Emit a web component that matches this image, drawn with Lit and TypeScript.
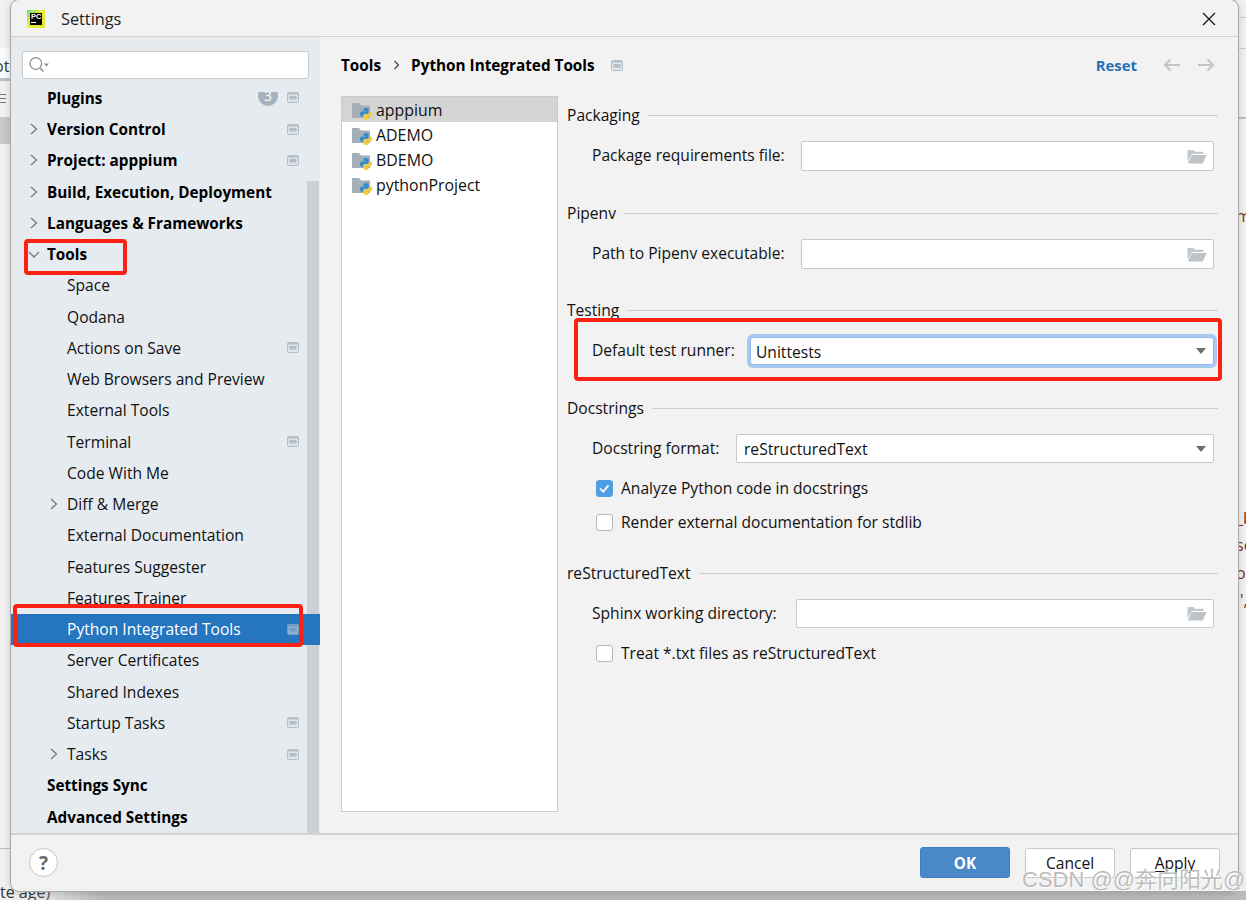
import { LitElement, html, css, svg } from "lit";
import { customElement } from "lit/decorators.js";

type Row = { t: string; lv: number; bold?: boolean; ch?: "r" | "d"; cfg?: boolean; badge?: string; sel?: boolean };

const rows: Row[] = [
  { t: "Plugins", lv: 0, bold: true, cfg: true, badge: "3" },
  { t: "Version Control", lv: 0, bold: true, ch: "r", cfg: true },
  { t: "Project: apppium", lv: 0, bold: true, ch: "r", cfg: true },
  { t: "Build, Execution, Deployment", lv: 0, bold: true, ch: "r" },
  { t: "Languages & Frameworks", lv: 0, bold: true, ch: "r" },
  { t: "Tools", lv: 0, bold: true, ch: "d" },
  { t: "Space", lv: 1 },
  { t: "Qodana", lv: 1 },
  { t: "Actions on Save", lv: 1, cfg: true },
  { t: "Web Browsers and Preview", lv: 1 },
  { t: "External Tools", lv: 1 },
  { t: "Terminal", lv: 1, cfg: true },
  { t: "Code With Me", lv: 1 },
  { t: "Diff & Merge", lv: 1, ch: "r" },
  { t: "External Documentation", lv: 1 },
  { t: "Features Suggester", lv: 1 },
  { t: "Features Trainer", lv: 1 },
  { t: "Python Integrated Tools", lv: 1, cfg: true, sel: true },
  { t: "Server Certificates", lv: 1 },
  { t: "Shared Indexes", lv: 1 },
  { t: "Startup Tasks", lv: 1, cfg: true },
  { t: "Tasks", lv: 1, ch: "r", cfg: true },
  { t: "Settings Sync", lv: 0, bold: true },
  { t: "Advanced Settings", lv: 0, bold: true },
];

const projects = ["apppium", "ADEMO", "BDEMO", "pythonProject"];

const cfgIcon = html`<svg class="cfg" width="12" height="11" viewBox="0 0 12 11">
  <rect x=".5" y=".5" width="11" height="10" rx="1" fill="#dde3e8" stroke="#b3bec7" />
  <rect x="1" y="1" width="10" height="1.500" fill="#b3bec7" />
  <rect x="2.500" y="4" width="7" height="3.500" fill="#b3bec7" />
</svg>`;

const folderIcon = html`<svg class="open" width="20" height="15" viewBox="0 0 20 15">
  <path d="M0.500 1h6l1.500 1.800h8.500v2.200H5L.5 12.500z" fill="#c2c9cd" />
  <path d="M4.800 6H19.600L15.800 14.500H.8z" fill="#bcc4c9" />
</svg>`;

const pyLogo = "M6 0C4.200 0 3.500.8 3.500 1.800V3H6.300V3.500H2C.8 3.500 0 4.500 0 6s.8 2.700 2 2.700H3V7.400C3 6.400 3.800 5.700 4.800 5.700H7.200C8 5.700 8.600 5.100 8.600 4.300V1.800C8.600 .8 7.800 0 6 0z";

const pyFolder = svg`<svg class="py" width="24" height="18" viewBox="0 0 24 18">
  <path d="M0 1h7l2 2.500h9V16H0z" fill="#a4afb8" />
  <g transform="translate(8 6)">
    <path d=${pyLogo} fill="#2f8bd0" />
    <path d=${pyLogo} fill="#f7cd3a" transform="rotate(180 6.100 6)" />
  </g>
</svg>`;

@customElement("app-root")
export class AppRoot extends LitElement {
  static styles = css`
    :host {
      display: block;
      position: relative;
      width: 1246px;
      height: 900px;
      overflow: hidden;
      background: #f1f1f1;
      font-family: "Open Sans", "Noto Sans", sans-serif;
      font-size: 15.600px;
      color: #111;
    }
    .bits span {
      position: absolute;
      font-size: 16px;
      line-height: 16px;
      white-space: nowrap;
    }
    .bits .dk { color: #333; }
    .bits .br { color: #8a2a10; }
    .b1 { left: -6px; top: 58px; }
    .b2 { left: 0; top: 884px; }
    .b3 { left: 1236px; top: 208px; }
    .b4 { left: 1236px; top: 510px; }
    .b5 { left: 1236px; top: 537px; }
    .b6 { left: 1236px; top: 565px; }
    .b7 { left: 1240px; top: 592px; }
    .bits i { position: absolute; display: block; }
    .s0 { left: 0; top: 48px; width: 11px; height: 30px; background: #fbfbfb; }
    .s1 { left: 0; top: 78px; width: 11px; height: 3px; background: #b9bfc7; }
    .s2 { left: 0; top: 117px; width: 11px; height: 27px; background: #c9c9c9; }
    .s3 { left: 1238px; top: 17px; width: 8px; height: 1px; background: #cfcfcf; }
    .s4 { left: 1238px; top: 48px; width: 8px; height: 1px; background: #cfcfcf; }
    .s5 { left: 1238px; top: 117px; width: 8px; height: 2px; background: #bdbdbd; }
    .s6 { left: 0; top: 848px; width: 11px; height: 1px; background: #bdbdbd; }
    .s8 { left: 0; top: 94px; width: 6px; height: 1px; background: #777; box-shadow: 0 4px 0 #777, 0 8px 0 #777; }
    .s7 {
      left: 30px;
      top: 891px;
      width: 1216px;
      height: 9px;
      background: linear-gradient(to right, rgba(190, 190, 190, 0), #bcbcbc 70px);
    }

    .dialog {
      position: absolute;
      z-index: 0;
      left: 11px;
      top: 0;
      width: 1227px;
      height: 891px;
      display: flex;
      flex-direction: column;
      background: #f2f2f2;
      border-radius: 8px;
      overflow: hidden;
      box-shadow: 0 0 0 1px #a8a8a8, 0 2px 8px rgba(0, 0, 0, 0.2);
    }
    .title {
      height: 36px;
      flex: none;
      display: flex;
      align-items: center;
      padding: 0 21px 0 16px;
      border-bottom: 1px solid #d0d0d0;
      font-size: 16.300px;
    }
    .title .x { margin-top: 2px; }
    .pc {
      width: 18px;
      height: 18px;
      box-sizing: border-box;
      background: linear-gradient(135deg, #5fe07a 0%, #e8f03c 45%, #e2e22a 100%);
      padding: 3px;
      margin-right: 16px;
      margin-top: 2px;
    }
    .pc div {
      width: 100%;
      height: 100%;
      background: #000;
      color: #fff;
      font: bold 7.500px/7px "Liberation Sans", sans-serif;
      padding-left: 1px;
      box-sizing: border-box;
      display: flex;
      flex-direction: column;
    }
    .pc u { display: block; width: 5px; height: 1px; background: #fff; margin-top: 2px; }
    .title .grow { flex: 1; color: #222; padding-top: 2px; }
    .body { flex: 1; display: flex; min-height: 0; }

    .side {
      position: relative;
      width: 309px;
      flex: none;
      background: #e6ebf0;
      display: flex;
      flex-direction: column;
    }
    .search {
      margin: 14px 11px 0 11px;
      height: 28px;
      flex: none;
      box-sizing: border-box;
      background: #fff;
      border: 1px solid #c9c9c9;
      border-radius: 3px;
      display: flex;
      align-items: center;
      padding-left: 6px;
    }
    .tree { margin-top: 13px; flex: 1; overflow: hidden; min-height: 0; }
    .tree-in { margin-top: -9.650px; }
    .row {
      height: 31.260px;
      display: flex;
      align-items: center;
      box-sizing: border-box;
      padding-right: 21px;
      color: #111;
      white-space: nowrap;
    }
    .row.l0 { padding-left: 36px; }
    .row.l1 { padding-left: 56px; }
    .row.bold { font-weight: 700; font-size: 15.300px; color: #000; }
    .row.sel { background: #2675bf; color: #fff; position: relative; z-index: 1; }
    .row.sel .cfg { opacity: 0.55; }
    .row .lab { flex: 1; }
    .chev { width: 20px; margin-left: -20px; height: 12px; display: block; flex: none; }
    .badge {
      width: 20px;
      height: 20px;
      border-radius: 50%;
      background: #a6b2bd;
      color: #fff;
      font-weight: 400;
      font-size: 14px;
      line-height: 20px;
      text-align: center;
      margin-right: 9px;
      margin-top: -4px;
    }
    .scroll {
      position: absolute;
      left: 296px;
      top: 144px;
      bottom: 0;
      width: 12px;
      background: #ccd1d6;
    }

    .main { flex: 1; display: flex; flex-direction: column; min-width: 0; }
    .crumb {
      height: 59px;
      flex: none;
      display: flex;
      align-items: center;
      padding: 0 22px 3px 21px;
      box-sizing: border-box;
      font-weight: 700;
      font-size: 15.300px;
      color: #000;
    }
    .crumb .sep { width: 30px; display: flex; justify-content: center; }
    .crumb .cfg { margin-left: 16px; }
    .crumb .grow { flex: 1; }
    .reset { color: #2470b3; margin-right: 25px; font-size: 14.900px; }
    .arrows { display: flex; gap: 14px; }
    .content { flex: 1; display: flex; min-height: 0; padding: 0 0 21px 21px; }
    .plist {
      width: 217px;
      flex: none;
      box-sizing: border-box;
      background: #fff;
      border: 1px solid #c9c9c9;
    }
    .pitem {
      height: 25px;
      display: flex;
      align-items: center;
      padding-left: 10px;
      font-size: 15.900px;
      color: #111;
    }
    .pitem.sel { background: #d4d4d4; }
    .py { flex: none; margin-top: 3px; }

    .form { width: 651px; margin-left: 9px; flex: none; }
    .head { height: 20px; display: flex; align-items: center; gap: 8px; white-space: nowrap; color: #111; }
    .head::after { content: ""; flex: 1; height: 1px; background: #cdcdcd; margin-left: 0; }
    .pack { margin-top: 9px; }
    .gap { margin-top: 32px; }
    .gap31 { margin-top: 31px; }
    .frow { margin-top: 16px; height: 30px; padding: 0 4px 0 25px; display: flex; align-items: center; }
    .frow.short { height: 29px; }
    .frow .lab { flex: none; white-space: nowrap; }
    .w1 { width: 209px; margin-top: -2px; }
    .w3 { width: 158px; margin-top: -2px; }
    .w4 { width: 144px; margin-top: -2px; }
    .w5 { width: 204px; margin-top: -2px; }
    .field {
      flex: 1;
      height: 100%;
      box-sizing: border-box;
      background: #fff;
      border: 1px solid #c9c9c9;
      border-radius: 2px;
      display: flex;
      align-items: center;
      justify-content: space-between;
      padding: 0 6px 0 7px;
    }
    .field .txt { padding-top: 1px; }
    .field.focus {
      height: 28px;
      border: 1px solid #8fbcec;
      box-shadow: 0 0 0 3px #a8caf0;
      border-radius: 3px;
      padding-left: 5px;
    }
    .tri { width: 0; height: 0; border: 5.500px solid transparent; border-top: 6px solid #6e6e6e; border-bottom: 0; margin-right: 1px; }
    .check { height: 20px; padding-left: 29px; display: flex; align-items: center; white-space: nowrap; }
    .m15 { margin-top: 15px; }
    .m14 { margin-top: 14px; }
    .box {
      width: 17px;
      height: 17px;
      box-sizing: border-box;
      border-radius: 3px;
      background: #fff;
      border: 1px solid #b6b6b6;
      margin-right: 8px;
      flex: none;
      display: block;
    }
    .box.on { background: #4f9ee3; border-color: #4f9ee3; }

    .foot {
      flex: none;
      border-top: 2px solid #d2d2d2;
      display: flex;
      align-items: center;
      padding: 0 18px 1px;
      box-sizing: content-box;
      height: 55px;
      position: relative;
    }
    .help {
      width: 29px;
      height: 29px;
      box-sizing: border-box;
      border-radius: 50%;
      background: #fff;
      border: 1px solid #c4c4c4;
      color: #6b6b6b;
      font-weight: 700;
      font-size: 19px;
      display: flex;
      align-items: center;
      justify-content: center;
      margin-right: auto;
    }
    .btn {
      width: 90px;
      height: 30px;
      box-sizing: border-box;
      background: #fff;
      border: 1px solid #c8c8c8;
      border-radius: 3px;
      display: flex;
      align-items: center;
      justify-content: center;
      margin-left: 15px;
      color: #111;
    }
    .btn.ok { background: #4a88c7; border-color: #3f7fc0; color: #fff; font-weight: 700; font-size: 15.300px; height: 31px; padding-top: 1px; }
    .btn u { text-underline-offset: 2px; }

    .mark {
      position: absolute;
      z-index: 1;
      box-sizing: border-box;
      border: 4px solid #fb2115;
      border-radius: 4px;
      pointer-events: none;
    }
    .m1 { left: 24px; top: 239px; width: 103px; height: 36px; }
    .m2 { left: 13px; top: 604px; width: 290px; height: 43px; }
    .m3 { left: 574px; top: 318px; width: 648px; height: 63px; }
    .wm {
      position: absolute;
      z-index: 1;
      left: 1022px;
      top: 867px;
      font: 22px/26px "Liberation Sans", "Noto Sans CJK SC", sans-serif;
      color: rgba(165, 165, 165, 0.75);
      text-shadow: 0 0 1px #fff, 1px 1px 0 rgba(255, 255, 255, 0.8);
      white-space: nowrap;
    }
  `;

  private chevron(c?: "r" | "d") {
    if (!c) return null;
    const d = c === "r" ? "M4 1l5.500 5-5.500 5" : "M2 4l5 5 5-5";
    return html`<svg class="chev" viewBox="0 0 20 12" width="20" height="12">
      <path d=${d} fill="none" stroke="#7a7a7a" stroke-width="1.300" />
    </svg>`;
  }

  render() {
    return html`
      <div class="bits">
        <i class="s0"></i>
        <span class="b1 dk">ot</span>
        <span class="b2 dk">te age)</span>
        <span class="b3 br">m</span>
        <span class="b4 br">_b</span>
        <span class="b5 br">se</span>
        <span class="b6 br">on</span>
        <span class="b7 br">',</span>
        <i class="s1"></i><i class="s2"></i><i class="s3"></i><i class="s4"></i><i class="s5"></i><i class="s6"></i><i class="s7"></i><i class="s8"></i>
      </div>
      <div class="dialog">
        <div class="title">
          <div class="pc"><div>PC<u></u></div></div>
          <div class="grow">Settings</div>
          <svg class="x" width="16" height="16" viewBox="0 0 16 16"><path d="M2 2l12 12M14 2L2 14" stroke="#111" stroke-width="1.200" fill="none" /></svg>
        </div>
        <div class="body">
          <div class="side">
            <div class="search">
              <svg width="24" height="18" viewBox="0 0 24 18">
                <circle cx="6.800" cy="7.500" r="5.800" fill="none" stroke="#8d8d8d" stroke-width="1.200" />
                <path d="M11 12l3.500 3.500" stroke="#8d8d8d" stroke-width="1.500" />
                <path d="M15 7.500h5l-2.500 3z" fill="#8d8d8d" />
              </svg>
            </div>
            <div class="tree">
              <div class="tree-in">
                ${rows.map(
                  (r) => html`<div class="row l${r.lv} ${r.bold ? "bold" : ""} ${r.sel ? "sel" : ""}">
                    ${this.chevron(r.ch)}
                    <span class="lab">${r.t}</span>
                    ${r.badge ? html`<span class="badge">${r.badge}</span>` : null}
                    ${r.cfg ? cfgIcon : null}
                  </div>`
                )}
              </div>
            </div>
            <div class="scroll"></div>
          </div>
          <div class="main">
            <div class="crumb">
              <span>Tools</span>
              <span class="sep"><svg width="7" height="10" viewBox="0 0 7 10"><path d="M1.500 1l4 4-4 4" fill="none" stroke="#444" stroke-width="1.200" /></svg></span>
              <span>Python Integrated Tools</span>
              ${cfgIcon}
              <span class="grow"></span>
              <span class="reset">Reset</span>
              <span class="arrows">
                <svg width="20" height="14" viewBox="0 0 20 14"><path d="M18 7H3M8.500 1.500L3 7l5.500 5.500" fill="none" stroke="#c4c4c4" stroke-width="2" /></svg>
                <svg width="20" height="14" viewBox="0 0 20 14"><path d="M2 7h15M11.500 1.500L17 7l-5.500 5.500" fill="none" stroke="#c4c4c4" stroke-width="2" /></svg>
              </span>
            </div>
            <div class="content">
              <div class="plist">
                ${projects.map(
                  (p, i) => html`<div class="pitem ${i === 0 ? "sel" : ""}">${pyFolder}<span>${p}</span></div>`
                )}
              </div>
              <div class="form">
                <div class="head pack">Packaging</div>
                <div class="frow"><span class="lab w1">Package requirements file:</span><div class="field"><span></span>${folderIcon}</div></div>
                <div class="head gap">Pipenv</div>
                <div class="frow"><span class="lab w1">Path to Pipenv executable:</span><div class="field"><span></span>${folderIcon}</div></div>
                <div class="head gap31">Testing</div>
                <div class="frow"><span class="lab w3">Default test runner:</span><div class="field focus"><span class="txt">Unittests</span><span class="tri"></span></div></div>
                <div class="head gap">Docstrings</div>
                <div class="frow short"><span class="lab w4">Docstring format:</span><div class="field"><span class="txt">reStructuredText</span><span class="tri"></span></div></div>
                <div class="check m15">
                  <svg class="box on" viewBox="0 0 17 17"><path d="M3.500 8.500l3.500 3.500 6-7" fill="none" stroke="#fff" stroke-width="2" /></svg>
                  <span>Analyze Python code in docstrings</span>
                </div>
                <div class="check m14"><span class="box"></span><span>Render external documentation for stdlib</span></div>
                <div class="head gap31">reStructuredText</div>
                <div class="frow short"><span class="lab w5">Sphinx working directory:</span><div class="field"><span></span>${folderIcon}</div></div>
                <div class="check m15"><span class="box"></span><span>Treat *.txt files as reStructuredText</span></div>
              </div>
            </div>
          </div>
        </div>
        <div class="foot">
          <div class="help">?</div>
          <div class="btn ok">OK</div>
          <div class="btn">Cancel</div>
          <div class="btn"><span><u>A</u>pply</span></div>
        </div>
      </div>
      <div class="mark m1"></div>
      <div class="mark m2"></div>
      <div class="mark m3"></div>
      <div class="wm">CSDN @@奔向阳光@</div>
    `;
  }
}
